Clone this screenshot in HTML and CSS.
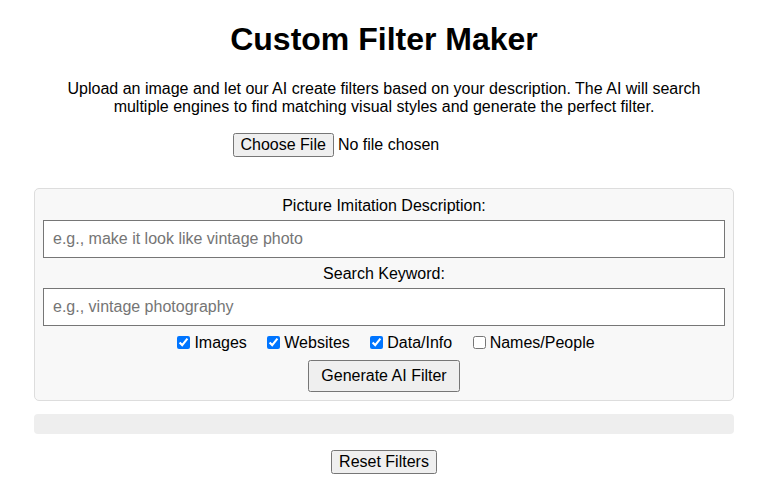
FILE: index.html
```html
<!DOCTYPE html>
<html>
<head>
<meta charset="utf-8">
<title>Custom Filter Maker</title>
<link rel="stylesheet" href="styles.css">
</head>
<body>
<div class="page">
  <h1 class="title">Custom Filter Maker</h1>
  <p class="intro">Upload an image and let our AI create filters based on your description. The AI will search multiple engines to find matching visual styles and generate the perfect filter.</p>
  <div class="upload"><input type="file" class="file"></div>
  <div class="panel">
    <label class="lbl" for="desc">Picture Imitation Description:</label>
    <input id="desc" class="field" type="text" placeholder="e.g., make it look like vintage photo">
    <label class="lbl" for="kw">Search Keyword:</label>
    <input id="kw" class="field" type="text" placeholder="e.g., vintage photography">
    <div class="checks">
      <label class="chk"><input type="checkbox" checked>Images</label>
      <label class="chk"><input type="checkbox" checked>Websites</label>
      <label class="chk"><input type="checkbox" checked>Data/Info</label>
      <label class="chk"><input type="checkbox">Names/People</label>
    </div>
    <button class="gen">Generate AI Filter</button>
  </div>
  <div class="bar"></div>
  <div class="reset-row"><button class="reset">Reset Filters</button></div>
</div>
</body>
</html>
```
FILE: styles.css
```css
html, body {
  margin: 0;
  padding: 0;
  background: #fff;
}
body {
  font-family: "Liberation Sans", Arial, sans-serif;
  font-size: 16px;
  color: #000;
}
.page {
  width: 700px;
  margin: 0 auto;
  text-align: center;
}
.title {
  font-size: 32px;
  font-weight: bold;
  margin: 21px 0 22px;
  line-height: 37px;
}
.intro {
  margin: 0 0 17px;
  padding: 0 25px;
  line-height: 18px;
}
.upload {
  margin-bottom: 31px;
}
.file {
  font-family: "Liberation Sans", Arial, sans-serif;
  font-size: 16px;
}
.panel {
  background: #f8f8f8;
  border: 1px solid #ddd;
  border-radius: 5px;
  padding: 8px;
}
.lbl {
  display: block;
  line-height: 18px;
  margin-bottom: 5px;
}
.field {
  display: block;
  box-sizing: border-box;
  width: 100%;
  height: 38px;
  padding: 0 9px;
  margin: 0 0 7px;
  border: 1px solid #767676;
  border-radius: 0;
  background: #fff;
  font-family: "Liberation Sans", Arial, sans-serif;
  font-size: 16px;
}
.field + .lbl {
  margin-top: 1px;
}
.field::placeholder {
  color: #757575;
}
.checks {
  line-height: 18px;
  margin: 6px 0 8px;
}
.chk {
  margin: 0 6px;
}
.chk input {
  margin: 3px 4px 3px 4px;
  vertical-align: -1px;
}
.gen {
  font-family: "Liberation Sans", Arial, sans-serif;
  font-size: 16px;
  height: 32px;
  padding: 0 11px;
}
.bar {
  height: 20px;
  background: #eee;
  border-radius: 4px;
  margin: 13px 0 16px;
}
.reset {
  font-family: "Liberation Sans", Arial, sans-serif;
  font-size: 16px;
}
```
